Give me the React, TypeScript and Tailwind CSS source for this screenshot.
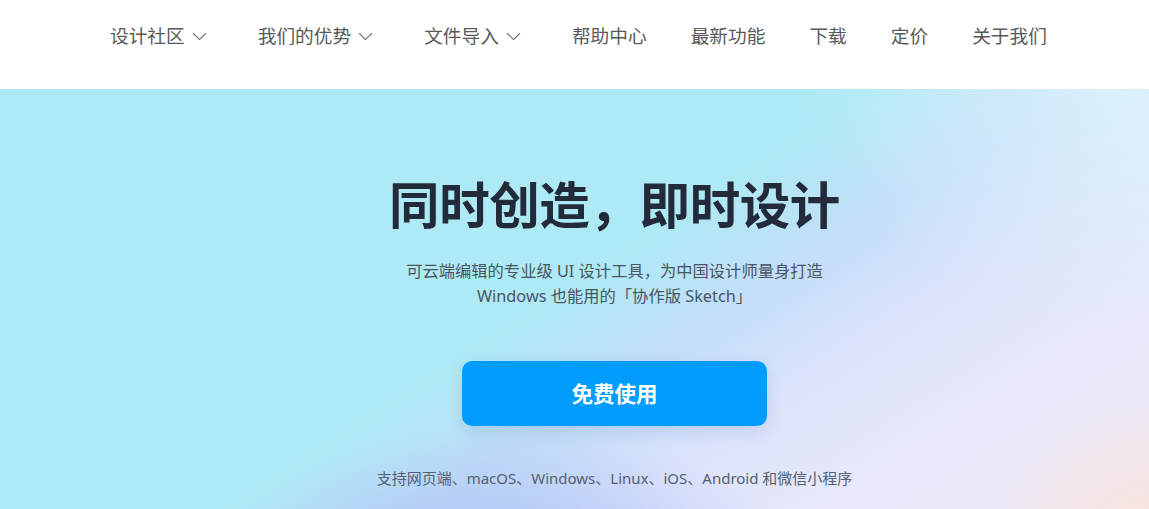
import React from 'react';

const font = { fontFamily: '"Noto Sans", "Noto Sans CJK SC", sans-serif' };

function Chevron() {
  return (
    <svg width="15" height="9" viewBox="0 0 15 9" fill="none" className="ml-[7px] mr-[7px] mt-[1px]">
      <path d="M1 1.2 L7.5 7.5 L14 1.2" stroke="#7a7a7a" strokeWidth="1.2" />
    </svg>
  );
}

const navItems: { label: string; menu?: boolean }[] = [
  { label: '设计社区', menu: true },
  { label: '我们的优势', menu: true },
  { label: '文件导入', menu: true },
  { label: '帮助中心' },
  { label: '最新功能' },
  { label: '下载' },
  { label: '定价' },
  { label: '关于我们' },
];

export default function App() {
  return (
    <div className="w-full min-h-screen bg-white overflow-hidden" style={font}>
      {/* header */}
      <header className="h-[89px] bg-white flex items-start pt-[24px] pl-[110px]">
        <nav className="flex items-center gap-[44px]">
          {navItems.map((item) => (
            <a key={item.label} className="flex items-center text-[18.7px] leading-[24px] text-[#595959] cursor-pointer">
              {item.label}
              {item.menu && <Chevron />}
            </a>
          ))}
        </nav>
      </header>

      {/* hero */}
      <section className="h-[460px] pl-[80px] pt-[86px] flex flex-col items-center bg-[radial-gradient(ellipse_300px_160px_at_44%_108%,rgba(162,186,246,0.95),rgba(162,186,246,0)),radial-gradient(ellipse_190px_170px_at_101%_101%,rgba(250,226,212,0.95),rgba(250,226,212,0)),radial-gradient(ellipse_340px_240px_at_100%_0%,rgba(220,242,252,0.95),rgba(220,242,252,0)),linear-gradient(147deg,#aeeaf5_47%,#c4def8_58%,#dde4fb_68%,#eae9fb_82%,#eee8f8)]">
        <h1 className="text-[50.5px] leading-[60px] font-bold text-[#232a3a] tracking-[-0.4px]">
          同时创造，即时设计
        </h1>
        <p className="mt-[24px] text-[16.3px] leading-[25px] text-[#4a5462] text-center">
          可云端编辑的专业级 UI 设计工具，为中国设计师量身打造
          <br />
          Windows 也能用的「协作版 Sketch」
        </p>
        <button className="mt-[52px] w-[305px] h-[65px] rounded-[10px] bg-[#009dff] text-white text-[21.5px] leading-[30px] font-bold shadow-[0_6px_16px_rgba(60,110,190,0.18)]">
          免费使用
        </button>
        <p className="mt-[42px] text-[15px] leading-[20px] text-[#566070]">
          支持网页端、macOS、Windows、Linux、iOS、Android 和微信小程序
        </p>
      </section>
    </div>
  );
}
